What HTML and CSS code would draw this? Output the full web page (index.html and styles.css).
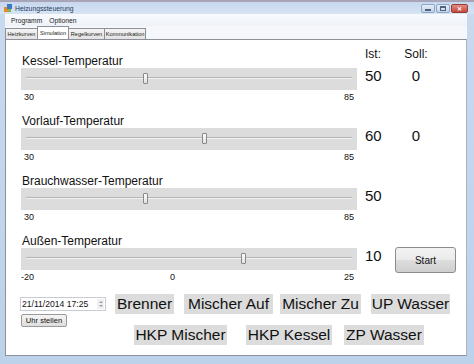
FILE: index.html
```html
<!DOCTYPE html>
<html lang="de">
<head>
<meta charset="utf-8">
<title>Heizungssteuerung</title>
<link rel="stylesheet" href="styles.css">
</head>
<body>
<div class="window">
  <div class="titlebar">
    <svg class="appicon" width="8" height="8" viewBox="0 0 8 8">
      <rect x="0" y="3" width="4" height="5" fill="#e08a2a"/>
      <rect x="3" y="0" width="5" height="5" fill="#3a78c8"/>
      <rect x="4" y="5" width="3" height="3" fill="#7ab648"/>
    </svg>
    <span class="title">Heizungssteuerung</span>
    <div class="controls">
      <span class="ctl"><span class="min-glyph"></span></span>
      <span class="ctl"><span class="max-glyph"></span></span>
      <span class="ctl close">✕</span>
    </div>
  </div>
  <div class="client">
    <div class="menubar"><span class="menuitem">Programm</span><span class="menuitem">Optionen</span></div>
    <div class="tabstrip">
      <span class="tab t1">Heizkurven</span><span class="tab t2 active">Simulation</span><span class="tab t3">Regelkurven</span><span class="tab t4">Kommunikation</span>
    </div>
    <div class="panel">
      <div class="block">
        <div class="label">Kessel-Temperatur</div>
        <div class="side head"><span class="ist">Ist:</span><span class="soll">Soll:</span></div>
        <div class="track"><div class="line"></div><div class="thumb" style="left:122px"></div></div>
        <div class="side vals"><span class="ist">50</span><span class="soll">0</span></div>
        <div class="scale"><span>30</span><span>85</span></div>
      </div>
      <div class="block">
        <div class="label">Vorlauf-Temperatur</div>
        <div class="side"></div>
        <div class="track"><div class="line"></div><div class="thumb" style="left:181px"></div></div>
        <div class="side vals"><span class="ist">60</span><span class="soll">0</span></div>
        <div class="scale"><span>30</span><span>85</span></div>
      </div>
      <div class="block">
        <div class="label">Brauchwasser-Temperatur</div>
        <div class="side"></div>
        <div class="track"><div class="line"></div><div class="thumb" style="left:122px"></div></div>
        <div class="side vals"><span class="ist">50</span></div>
        <div class="scale"><span>30</span><span>85</span></div>
      </div>
      <div class="block">
        <div class="label">Außen-Temperatur</div>
        <div class="side"></div>
        <div class="track"><div class="line"></div><div class="thumb" style="left:220px"></div></div>
        <div class="side vals"><span class="ist">10</span><button class="start">Start</button></div>
        <div class="scale three"><span>-20</span><span>0</span><span>25</span></div>
      </div>
      <div class="bottom">
        <div class="leftcol">
          <div class="dtp"><span>21/11/2014 17:25</span><span class="spin"><span class="up"></span><span class="down"></span></span></div>
          <button class="uhr">Uhr stellen</button>
        </div>
        <div class="btncol">
          <div class="btnrow r1">
            <span class="big b-brenner">Brenner</span>
            <span class="big b-auf">Mischer Auf</span>
            <span class="big b-zu">Mischer Zu</span>
            <span class="big b-up">UP Wasser</span>
          </div>
          <div class="btnrow r2">
            <span class="big b-hkpm">HKP Mischer</span>
            <span class="big b-hkpk">HKP Kessel</span>
            <span class="big b-zp">ZP Wasser</span>
          </div>
        </div>
      </div>
    </div>
  </div>
</div>
</body>
</html>
```
FILE: styles.css
```css
* { box-sizing: border-box; }
html, body { margin: 0; padding: 0; }
body {
  width: 474px; height: 364px; overflow: hidden;
  font-family: "Liberation Sans", Arial, sans-serif;
  background: #c4d6ec;
}
.window {
  width: 474px; height: 364px;
  display: flex; flex-direction: column;
  background: linear-gradient(#c9daee, #bcd1ea);
}
.titlebar {
  height: 14px; flex: none;
  display: flex; align-items: center;
  padding-left: 4px;
  background: linear-gradient(#a9a5b8 0, #a9a5b8 2px, #c7d8ee 2px, #d6e3f3 14px);
}
.appicon { margin-top: 2px; }
.title { font-size: 6.8px; color: #1e3a5e; margin-left: 3px; margin-top: 2px; }
.controls { margin-left: auto; margin-right: 6px; display: flex; gap: 1px; margin-top: 3px; }
.ctl {
  width: 14px; height: 9px; border: 1px solid #8ea7c6; border-radius: 2px;
  background: linear-gradient(#e6eef8, #c3d3e8);
  display: flex; align-items: center; justify-content: center;
}
.ctl.close { width: 17px; background: linear-gradient(#e08d84, #c5483d); border-color: #9a3b34; color: #fff; font-size: 6px; font-weight: bold; }
.min-glyph { width: 6px; height: 2px; background: #50637e; margin-top: 3px; }
.max-glyph { width: 6px; height: 5px; border: 1px solid #50637e; border-top-width: 2px; }
.client {
  flex: 1; display: flex; flex-direction: column;
  margin: 0 7px 8px 5px;
  background: #f3f6fa;
}
.menubar {
  height: 12px; flex: none; display: flex; align-items: center;
  padding-left: 6px; gap: 7px;
  background: linear-gradient(#f8fafd, #eef2f8);
  font-size: 6.7px; color: #1b1b1b;
}
.tabstrip {
  height: 13px; flex: none; display: flex; align-items: flex-end;
  background: #f5f7fa;
}
.tab {
  height: 11px; font-size: 5.6px; color: #222;
  padding: 0; text-align: center; line-height: 10px;
  border: 1px solid #8d9098; border-bottom: none;
  background: linear-gradient(#f4f4f4, #e2e2e2);
  margin-right: -1px;
}
.t1 { width: 33px; }
.t2 { width: 32px; }
.t3 { width: 37px; }
.t4 { width: 42px; }
.tab.active { height: 13px; background: #fff; position: relative; z-index: 1; line-height: 12px; }
.panel {
  flex: 1; background: #fff;
  border: 1px solid #8d9098; border-right-color: #a9b3c2;
  padding: 14px 0 0 15px;
  display: flex; flex-direction: column;
}
.block {
  display: grid;
  grid-template-columns: 336px 100px;
  grid-template-rows: 14px 22px 14px;
  column-gap: 8px;
  margin-bottom: 10px;
}
.label { font-size: 12px; color: #111; line-height: 14px; padding-left: 1px; }
.side { display: flex; }
.side .ist { width: 38px; }
.side .soll { width: 26px; text-align: center; }
.head { font-size: 12px; color: #111; margin-top: -7px; }
.vals { font-size: 15px; color: #111; line-height: 16px; align-items: flex-start; }
.track {
  background: #dcdcdc; position: relative;
}
.line {
  position: absolute; left: 5px; right: 5px; top: 9px; height: 2px;
  border-top: 1px solid #b5b5b5; border-bottom: 1px solid #f2f2f2;
}
.thumb {
  position: absolute; top: 5px; width: 5px; height: 11px;
  border: 1px solid #8a8a8a; border-radius: 1px;
  background: linear-gradient(#fbfbfb, #e3e3e3);
}
.scale {
  display: flex; justify-content: space-between;
  font-size: 9px; line-height: 14px; color: #111;
  padding: 0 3px 0 3px;
}
.scale.three { padding-left: 0; justify-content: flex-start; }
.scale.three span:nth-child(2) { margin-left: 136px; margin-right: auto; }
.start {
  margin-left: -8px; margin-top: -1px;
  width: 61px; height: 26px;
  font-family: inherit; font-size: 10px; color: #111;
  border: 1px solid #8c8c8c; border-radius: 3px;
  background: linear-gradient(#f3f3f3 0, #ebebeb 50%, #dddddd 50%, #cfcfcf 100%);
}
.bottom { display: flex; }
.leftcol { display: flex; flex-direction: column; width: 95px; padding-top: 3px; margin-left: -1px; }
.dtp {
  width: 86px; height: 14px;
  border: 1px solid #c8ccd2;
  font-size: 8.6px; line-height: 12px; padding-left: 1px; color: #111;
  display: flex; justify-content: space-between; align-items: center;
}
.spin { display: flex; flex-direction: column; gap: 2px; margin-right: 1px; width: 7px; height: 10px; align-items: center; justify-content: center; background: #f0f0f0; }
.up { border: 2px solid transparent; border-bottom: 2px solid #9a9a9a; border-top: none; }
.down { border: 2px solid transparent; border-top: 2px solid #9a9a9a; border-bottom: none; }
.uhr {
  margin-top: 3px; margin-left: 1px; width: 46px; height: 13px; padding: 0;
  font-family: inherit; font-size: 7.6px; color: #111;
  border: 1px solid #9a9a9a; border-radius: 2px;
  background: linear-gradient(#f5f5f5, #dedede);
}
.btncol { display: flex; flex-direction: column; }
.btnrow { display: flex; height: 20px; }
.r2 { margin-top: 11px; }
.big {
  display: inline-block; height: 20px;
  background: #dcdcdc;
  font-size: 15.5px; line-height: 20px; color: #111;
  text-align: center;
}
.b-brenner { width: 59px; }
.b-auf { width: 89px; margin-left: 10px; }
.b-zu { width: 81px; margin-left: 7px; }
.b-up { width: 79px; margin-left: 10px; }
.b-hkpm { width: 93px; margin-left: 19px; }
.b-hkpk { width: 86px; margin-left: 19px; }
.b-zp { width: 80px; margin-left: 12px; }
```
